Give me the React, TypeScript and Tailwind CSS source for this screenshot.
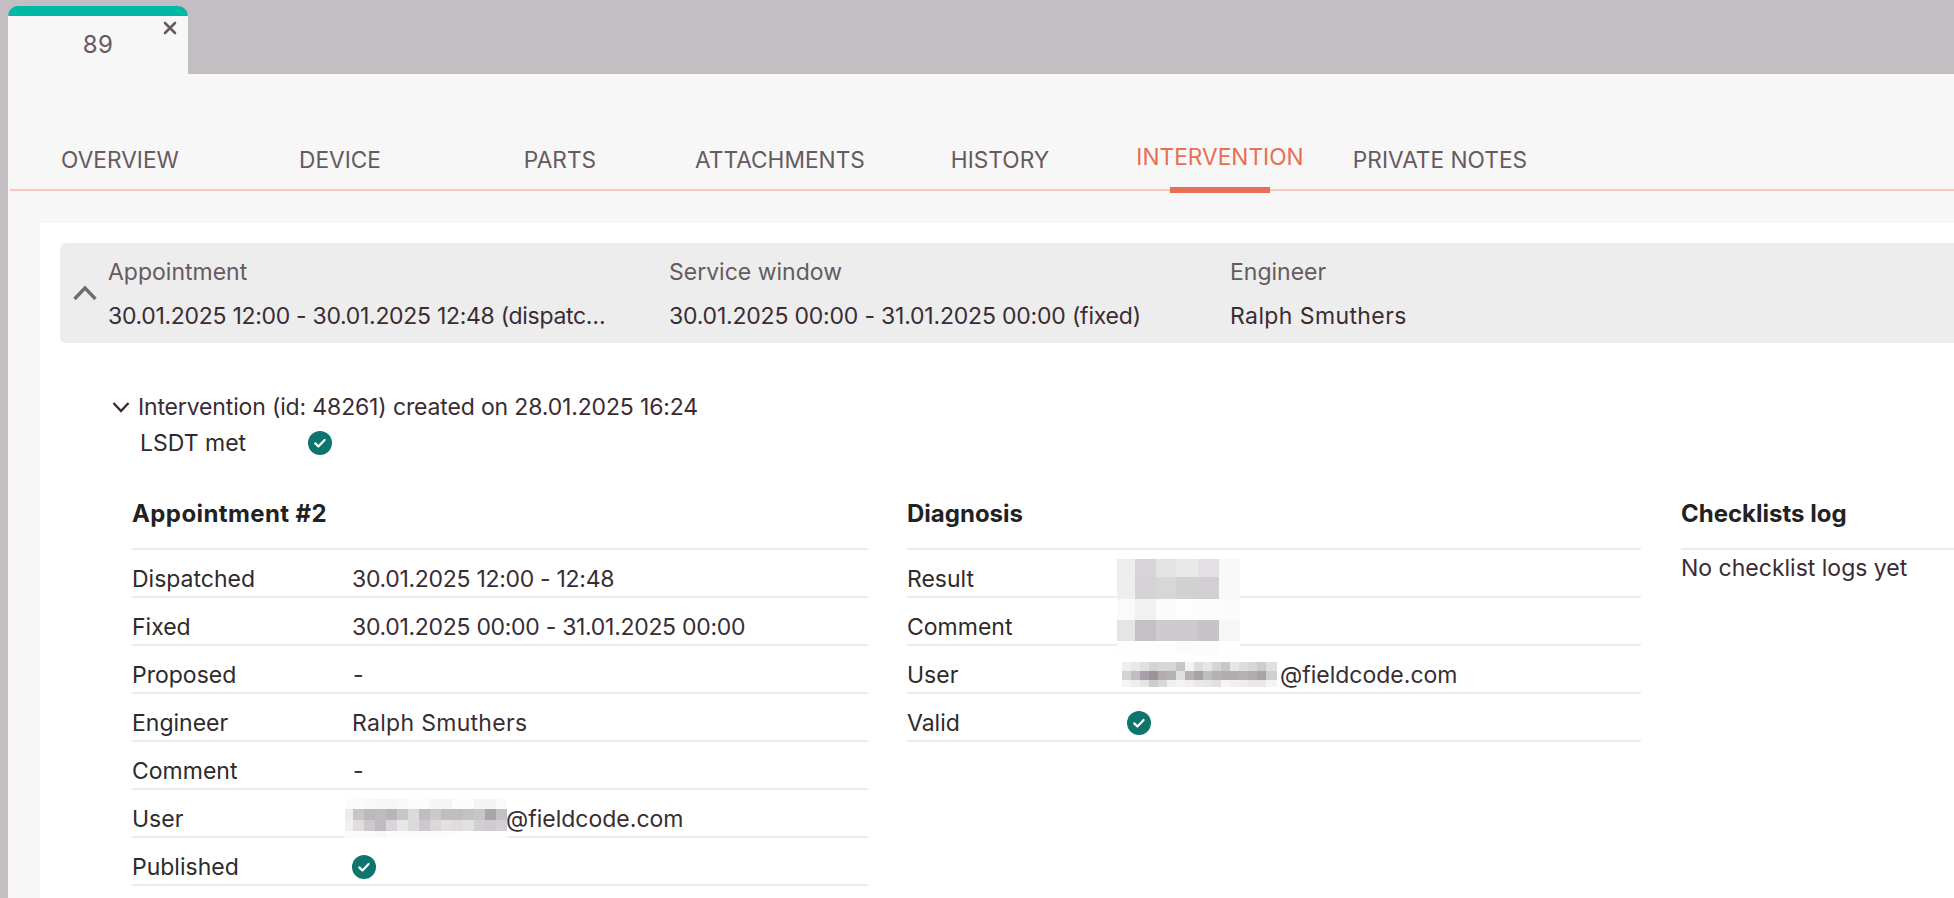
import { ReactNode } from 'react';

const tabs = ['OVERVIEW', 'DEVICE', 'PARTS', 'ATTACHMENTS', 'HISTORY', 'INTERVENTION', 'PRIVATE NOTES'];

function Mosaic({ cols, rows, colors, className }: { cols: number[]; rows: number[]; colors: string[][]; className: string }) {
  const w = cols.reduce((a, b) => a + b, 0);
  const h = rows.reduce((a, b) => a + b, 0);
  let y = 0;
  return (
    <svg width={w} height={h} viewBox={`0 0 ${w} ${h}`} shapeRendering="crispEdges" className={className}>
      {rows.map((rh, r) => {
        let x = 0;
        const cells = cols.map((cw, c) => {
          const el = <rect key={`${r}-${c}`} x={x} y={y} width={cw} height={rh} fill={colors[r][c]} />;
          x += cw;
          return el;
        });
        y += rh;
        return cells;
      })}
    </svg>
  );
}

const split = (s: string) => s.split(' ').map((c) => `#${c}`);

const apptUser = [
  split('fbfbfb fbfbfb f9f9f9 f6f6f6 f6f6f6 f9f9f9 fcfcfc fcfcfc f5f5f5 f5f5f5 fcfcfc fcfcfc f4f4f4 f4f4f4 fafafa'),
  split('ecebec c8c4c8 bcb8bc c0bbc0 b8b4b8 c8c4c8 dcdadc c0bcc0 ccc8cc c0bcc0 c0bcc0 c4c0c4 c8c5c8 a9a5a9 c4c0c4'),
  split('f0f0f0 dedcde ccc9cc bfbbbf d8d6d8 e8e7e8 dcdadc ccc9cc dad8da e2e1e2 dedcde e2e1e2 d0ced0 cfcccf d2d0d2'),
  split('fbfbfb fbfbfb fbfbfb f8f8f8 fcfcfc fcfcfc fcfcfc fcfcfc fcfcfc fcfcfc fdfdfd fdfdfd fdfdfd fdfdfd fdfdfd'),
];

const diagnosisBlock = [
  split('eeeeee d6d4d6 e4e3e4 e9e9e9 e2e0e2 f9f9f9'),
  split('efeeef d6d3d6 d8d6d8 d3d0d3 d3d0d3 f9f9f9'),
  split('fafafa f2f1f2 fbfbfb fdfdfd fcfcfc fbfbfb'),
  split('e6e5e6 c4c1c4 cecbce cdcacd c7c4c7 f6f6f6'),
  split('fefefe fefefe fefefe fbfbfb fcfcfc fefefe'),
];

const diagnosisUser = [
  split('eeeeee e8e8e8 e0e0e0 d4d2d4 d8d6d8 d8d6d8 c8c6c8 f4f4f4 dedcde e6e6e6 d6d4d6 c8c6c8 e6e6e6 dcdcdc d8d6d8 cecbce e0e0e0'),
  split('d4d2d4 c0bdc0 a89fa8 9c949c b0acb0 b4b0b4 e0e0e0 b4b0b4 a8a2a8 c0bdc0 b4b0b4 b0acb0 b0acb0 b4b0b4 b0acb0 a8a4a8 d0ced0'),
  split('f4f4f4 eeeeee e4e4e4 cccccc d8d8d8 f0f0f0 f4f4f4 f0f0f0 e8e8e8 e6e6e6 e0e0e0 f4f4f4 f0f0f0 eeeeee e8e8e8 e8e8e8 f4f4f4'),
];

function Check({ className = '' }: { className?: string }) {
  return (
    <svg width="24" height="24" viewBox="0 0 24 24" className={className}>
      <circle cx="12" cy="12" r="12" fill="#0e756e" />
      <path d="M7.2 12.4l3.2 3 6.2-6.4" fill="none" stroke="#fff" strokeWidth="2.2" strokeLinecap="round" strokeLinejoin="round" />
    </svg>
  );
}

function Row({ label, children, overlay, labelW = 'w-[221px]' }: { label: string; children: ReactNode; overlay?: ReactNode; labelW?: string }) {
  return (
    <div className="relative flex items-center h-[48px] pt-[12px] border-b-2 border-[#ececec]">
      <div className={`${labelW} shrink-0 text-[#2f2a2c]`}>{label}</div>
      <div className="flex items-center text-[#3a2c33]">{children}</div>
      {overlay}
    </div>
  );
}

function SectionTitle({ children }: { children: ReactNode }) {
  return (
    <div className="flex items-center h-[72px] pt-[2px] border-b-2 border-[#ececec] text-[24px] font-bold text-[#222222]">
      {children}
    </div>
  );
}

export default function App() {
  return (
    <div
      className="h-screen overflow-hidden flex flex-col bg-[#c2bec2] text-[23px] leading-[30px]"
      style={{ fontFamily: 'Inter, sans-serif' }}
    >
      <div className="h-[74px] shrink-0 pl-2 pt-[6px]">
        <div className="relative w-[180px] h-[68px] bg-[#f7f7f7] rounded-t-[10px] border-t-[10px] border-[#00b8a6] text-center text-[#665a5f]">
          <div className="pt-[14px] text-[24px] tracking-[0.5px]">89</div>
          <svg width="14" height="14" viewBox="0 0 14 14" className="absolute left-[155px] top-[5px]">
            <path d="M2 2l10 10M12 2L2 12" stroke="#665a5f" strokeWidth="2.6" strokeLinecap="round" />
          </svg>
        </div>
      </div>

      <div className="flex-1 ml-2 bg-[#f7f7f7] flex flex-col min-h-0">
        <div className="ml-[2px] h-[117px] shrink-0 flex items-end border-b-2 border-[#f5c8c0] text-[22.7px]">
          {tabs.map((t) =>
            t === 'INTERVENTION' ? (
              <div key={t} className="relative w-[220px] h-[47px] text-center text-[#e66f55]">
                <span>{t}</span>
                <div className="absolute left-[60px] bottom-[-4px] w-[100px] h-[6px] bg-[#e66f55]" />
              </div>
            ) : (
              <div key={t} className="w-[220px] h-[46px] pt-[2px] text-center text-[#665a5f]">
                {t}
              </div>
            ),
          )}
        </div>

        <div className="flex-1 mt-[32px] ml-[32px] bg-white pt-[20px] pl-[20px] min-h-0">
          <div className="relative flex items-center h-[100px] pt-[2px] bg-[#ededed] rounded-l-[6px] pl-[48px]">
            <svg width="26" height="16" viewBox="0 0 26 16" className="absolute left-[12px] top-[42px]">
              <path d="M2.5 14L13 3l10.5 11" fill="none" stroke="#6d6d6d" strokeWidth="3.4" />
            </svg>
            <div className="w-[561px] shrink-0">
              <div className="text-[#665a5f] mb-[14px]">Appointment</div>
              <div className="w-[499px] truncate tracking-[-0.3px] text-[#3a2c33]">
                30.01.2025 12:00 - 30.01.2025 12:48 (dispatched)
              </div>
            </div>
            <div className="w-[561px] shrink-0">
              <div className="text-[#665a5f] mb-[14px]">Service window</div>
              <div className="w-[500px] truncate tracking-[-0.2px] text-[#3a2c33]">
                30.01.2025 00:00 - 31.01.2025 00:00 (fixed)
              </div>
            </div>
            <div className="w-[561px] shrink-0">
              <div className="text-[#665a5f] mb-[14px]">Engineer</div>
              <div className="w-[500px] truncate tracking-[0.4px] text-[#3a2c33]">Ralph Smuthers</div>
            </div>
          </div>

          <div className="mt-[46px] pl-[52px] flex items-center h-[36px] tracking-[-0.15px] text-[#3a2c33]">
            <svg width="18" height="12" viewBox="0 0 18 12" className="mr-[8px]">
              <path d="M1.5 2l7.5 8 7.5-8" fill="none" stroke="#3a2c33" strokeWidth="2.4" />
            </svg>
            Intervention (id: 48261) created on 28.01.2025 16:24
          </div>
          <div className="pl-[80px] flex items-center h-[36px] text-[#2f2a2c]">
            <span className="w-[168px]">LSDT met</span>
            <Check />
          </div>

          <div className="mt-[17px] pl-[72px] flex">
            <div className="w-[736px] shrink-0">
              <SectionTitle><span className="tracking-[0.4px]">Appointment #2</span></SectionTitle>
              <Row label="Dispatched"><span className="-ml-px tracking-[-0.3px]">30.01.2025 12:00 - 12:48</span></Row>
              <Row label="Fixed"><span className="-ml-px tracking-[-0.3px]">30.01.2025 00:00 - 31.01.2025 00:00</span></Row>
              <Row label="Proposed">-</Row>
              <Row label="Engineer"><span className="-ml-px tracking-[0.3px]">Ralph Smuthers</span></Row>
              <Row label="Comment">-</Row>
              <Row
                label="User"
                overlay={
                  <Mosaic
                    cols={[8, 11, 11, 11, 11, 11, 11, 11, 11, 11, 11, 11, 11, 11, 11]}
                    rows={[10, 11, 11, 7]}
                    colors={apptUser}
                    className="absolute left-[213px] top-[9px]"
                  />
                }
              >
                <span className="w-[153px]" />
                @fieldcode.com
              </Row>
              <Row label="Published">
                <Check className="-ml-px" />
              </Row>
            </div>

            <div className="w-[734px] shrink-0 ml-[39px]">
              <SectionTitle>Diagnosis</SectionTitle>
              <Row
                label="Result"
                labelW="w-[220px]"
                overlay={
                  <Mosaic
                    cols={[18, 21, 20, 22, 21, 21]}
                    rows={[18, 22, 21, 21, 14]}
                    colors={diagnosisBlock}
                    className="absolute z-10 left-[210px] top-[9px]"
                  />
                }
              >
                <span />
              </Row>
              <Row label="Comment" labelW="w-[220px]">
                <span />
              </Row>
              <Row
                label="User"
                labelW="w-[220px]"
                overlay={
                  <Mosaic
                    cols={[9, 9, 9, 9, 9, 9, 9, 9, 9, 9, 9, 9, 9, 9, 9, 9, 11]}
                    rows={[9, 9, 7]}
                    colors={diagnosisUser}
                    className="absolute left-[215px] top-[16px]"
                  />
                }
              >
                <span className="w-[153px]" />
                @fieldcode.com
              </Row>
              <Row label="Valid" labelW="w-[220px]">
                <Check />
              </Row>
            </div>

            <div className="flex-1 ml-[40px]">
              <SectionTitle>Checklists log</SectionTitle>
              <div className="pt-[3px] text-[#3a2c33]">No checklist logs yet</div>
            </div>
          </div>
        </div>
      </div>
    </div>
  );
}
